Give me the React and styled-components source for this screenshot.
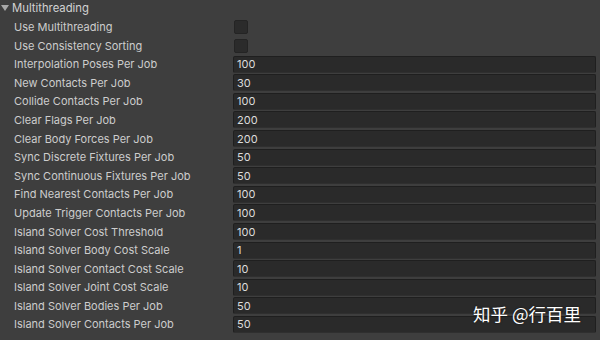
import React from "react";
import styled, { createGlobalStyle } from "styled-components";

const GlobalStyle = createGlobalStyle`
  html, body {
    margin: 0;
    padding: 0;
    background: #3e3e3e;
  }
  body {
    font-family: Inter, "Noto Sans", sans-serif;
  }
`;

const rows = [
  { label: "Use Multithreading", check: true },
  { label: "Use Consistency Sorting", check: true },
  { label: "Interpolation Poses Per Job", value: "100" },
  { label: "New Contacts Per Job", value: "30" },
  { label: "Collide Contacts Per Job", value: "100" },
  { label: "Clear Flags Per Job", value: "200" },
  { label: "Clear Body Forces Per Job", value: "200" },
  { label: "Sync Discrete Fixtures Per Job", value: "50" },
  { label: "Sync Continuous Fixtures Per Job", value: "50" },
  { label: "Find Nearest Contacts Per Job", value: "100" },
  { label: "Update Trigger Contacts Per Job", value: "100" },
  { label: "Island Solver Cost Threshold", value: "100" },
  { label: "Island Solver Body Cost Scale", value: "1" },
  { label: "Island Solver Contact Cost Scale", value: "10" },
  { label: "Island Solver Joint Cost Scale", value: "10" },
  { label: "Island Solver Bodies Per Job", value: "50" },
  { label: "Island Solver Contacts Per Job", value: "50" },
];

const App = () => {
  return (
    <>
      <GlobalStyle />
      <Panel>
        <Header>
          <Arrow />
          <span>Multithreading</span>
        </Header>
        {rows.map((r) => (
          <Row key={r.label}>
            <Label>{r.label}</Label>
            {r.check ? <Check /> : <Field>{r.value}</Field>}
          </Row>
        ))}
        <Watermark>知乎 @行百里</Watermark>
      </Panel>
    </>
  );
};

export default App;

const Panel = styled.div`
  position: relative;
  width: 600px;
  height: 340px;
  overflow: hidden;
  background: #3e3e3e;
  color: #cdcdcd;
  font-size: 11px;
`;

const Header = styled.div`
  height: 17.7px;
  display: flex;
  align-items: center;
  gap: 3px;
  padding-left: 1px;
  padding-bottom: 2px;
  box-sizing: border-box;
  font-size: 11.3px;
  color: #d2d2d2;
`;

const Arrow = styled.div`
  width: 0;
  height: 0;
  border-left: 4.5px solid transparent;
  border-right: 4.5px solid transparent;
  border-top: 6px solid #a8a8a8;
  margin-top: 1px;
`;

const Row = styled.div`
  height: 18.6px;
  display: grid;
  grid-template-columns: 233px 1fr;
  align-items: center;
  padding-right: 4px;
`;

const Label = styled.div`
  padding-left: 14px;
  white-space: nowrap;
`;

const Check = styled.div`
  width: 12px;
  height: 12px;
  margin-left: 1px;
  background: #2b2b2b;
  border: 1px solid #242424;
  border-radius: 2px;
`;

const Field = styled.div`
  height: 17px;
  box-sizing: border-box;
  display: flex;
  align-items: center;
  padding-left: 3px;
  background: #2a2a2a;
  border: 1px solid #1f1f1f;
  border-bottom-color: #2f2f2f;
  border-radius: 2px;
  color: #dcdcdc;
`;

const Watermark = styled.div`
  position: absolute;
  left: 473px;
  top: 301px;
  font-family: "Noto Sans CJK SC", sans-serif;
  font-size: 17.5px;
  color: #ffffff;
  text-shadow: 0 0 2px rgba(0, 0, 0, 0.6);
`;
